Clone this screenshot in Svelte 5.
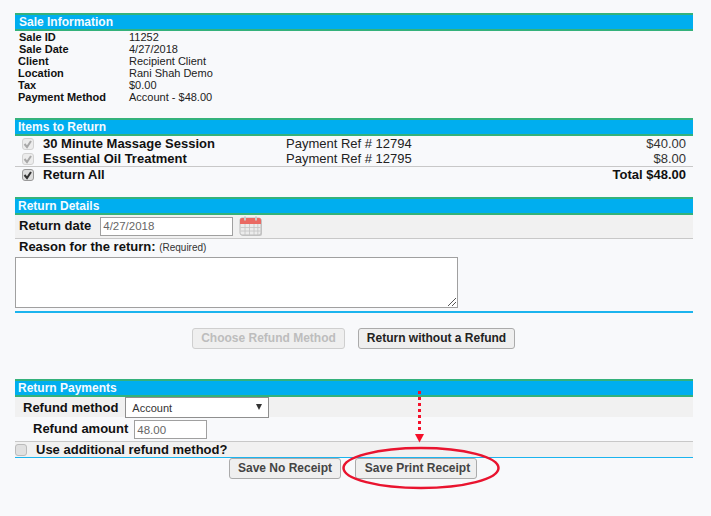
<script>
  const info = [
    ['Sale ID', '11252', 'in1'],
    ['Sale Date', '4/27/2018', 'in1'],
    ['Client', 'Recipient Client', ''],
    ['Location', 'Rani Shah Demo', ''],
    ['Tax', '$0.00', ''],
    ['Payment Method', 'Account - $48.00', '']
  ];
  const items = [
    ['30 Minute Massage Session', 'Payment Ref # 12794', '$40.00'],
    ['Essential Oil Treatment', 'Payment Ref # 12795', '$8.00']
  ];
</script>

<div class="page">
  <section class="sale">
    <h2 class="head first">Sale Information</h2>
    <div class="info">
      {#each info as [k, v, c]}
        <div class="info-row {c}"><b>{k}</b><span>{v}</span></div>
      {/each}
    </div>
  </section>

  <section class="items">
    <h2 class="head">Items to Return</h2>
    <div class="item-list">
      {#each items as [name, ref, price]}
        <div class="item">
          <span class="check dim"><svg viewBox="0 0 12 12" width="12" height="12"><path d="M2.500 6l2.500 3 4-6" fill="none" stroke="#a8a8a8" stroke-width="2"/></svg></span>
          <b class="name">{name}</b><span class="ref">{ref}</span><span class="price">{price}</span>
        </div>
      {/each}
    </div>
    <div class="item total">
      <span class="check on"><svg viewBox="0 0 12 12" width="12" height="12"><path d="M2.500 6l2.500 3 4-6" fill="none" stroke="#333" stroke-width="2"/></svg></span>
      <b class="name">Return All</b><b class="price">Total $48.00</b>
    </div>
  </section>

  <section class="details">
    <h2 class="head">Return Details</h2>
    <div class="date-row">
      <b>Return date</b>
      <span class="field date">4/27/2018</span>
      <svg class="cal" viewBox="0 0 24 22" width="24" height="22">
        <rect x="2" y="4" width="21" height="17" rx="2" fill="#9a9a9a" opacity=".5"/>
        <rect x="1" y="3" width="21" height="17" rx="2" fill="#ececec" stroke="#bdbdbd"/>
        <path d="M1 9V5a2 2 0 0 1 2-2h17a2 2 0 0 1 2 2v4z" fill="#ea6a64"/>
        <path d="M6 1.500v4M17 1.500v4" stroke="#c9c9c9" stroke-width="2"/>
        <path d="M1.500 12.500h20M1.500 16h20M6 9v11M10.500 9v11M15 9v11M18.800 9v11" stroke="#c4c4c4" stroke-width=".8" fill="none"/>
      </svg>
    </div>
    <div class="reason"><b>Reason for the return:</b> <small>(Required)</small></div>
    <div class="textarea">
      <svg class="grip" viewBox="0 0 10 10" width="10" height="10"><path d="M1 9l8-8M5 9l4-4" stroke="#555" stroke-width="1"/></svg>
    </div>
    <div class="rule"></div>
  </section>

  <div class="choices">
    <button class="btn disabled">Choose Refund Method</button>
    <button class="btn strong">Return without a Refund</button>
  </div>

  <section class="payments">
    <h2 class="head">Return Payments</h2>
    <div class="method-row">
      <b>Refund method</b>
      <span class="select">Account<i></i></span>
    </div>
    <div class="amount-row">
      <b>Refund amount</b>
      <span class="field amount">48.00</span>
    </div>
    <div class="extra-row">
      <span class="check"></span>
      <b>Use additional refund method?</b>
    </div>
    <div class="actions">
      <button class="btn">Save No Receipt</button>
      <button class="btn print">Save Print Receipt</button>
    </div>
  </section>

  <svg class="marks" width="711" height="516" viewBox="0 0 711 516">
    <path d="M419.500 391V433" stroke="#f5102a" stroke-width="3" stroke-dasharray="3 3" fill="none"/>
    <path d="M415 434h9l-4.500 8.500z" fill="#f5102a"/>
    <ellipse cx="421" cy="468" rx="77.500" ry="20" fill="none" stroke="#e9142f" stroke-width="2.500"/>
  </svg>
</div>

<style>
  :global(body) {
    margin: 0;
    background: #f8f9fb;
  }
  .page {
    position: relative;
    width: 678px;
    height: 516px;
    padding-left: 15px;
    overflow: hidden;
    font-family: "Liberation Sans", Arial, sans-serif;
    color: #111;
  }
  .head {
    margin: 0;
    height: 14px;
    padding-left: 3px;
    background: #00aeef;
    border-top: 2px solid #34b27b;
    border-bottom: 2px solid #34b27b;
    color: #f4fbff;
    font-size: 12px;
    font-weight: bold;
    line-height: 14px;
  }
  .head.first {
    padding-left: 4px;
  }
  .sale {
    padding-top: 13px;
  }
  .info {
    height: 87px;
    font-size: 11px;
    line-height: 12px;
  }
  .info-row {
    display: flex;
    height: 12px;
    padding-left: 3px;
  }
  .info-row b {
    width: 110px;
    font-weight: bold;
  }
  .info-row span {
    margin-left: 1px;
    color: #222;
  }
  .info-row.in1 {
    padding-left: 4px;
  }
  .info-row.in1 span {
    margin-left: 0;
  }
  .items {
    height: 79px;
  }
  .item-list {
    height: 30px;
    border-bottom: 1px solid #c8c8c8;
  }
  .item {
    display: flex;
    align-items: center;
    height: 15px;
    padding-left: 7px;
    font-size: 13px;
  }
  .item .name {
    width: 243px;
    margin-left: 9px;
  }
  .ref {
    color: #222;
  }
  .price {
    margin-left: auto;
    margin-right: 7px;
    color: #333;
  }
  .total .price {
    color: #111;
  }
  .check {
    flex: none;
    display: inline-block;
    box-sizing: border-box;
    width: 12px;
    height: 12px;
    background: #e4e4e4;
    border: 1px solid #b3b3b3;
    border-radius: 3px;
    line-height: 0;
  }
  .check svg {
    margin: -1px;
  }
  .check.dim {
    background: #ececec;
    border-color: #d2d2d2;
  }
  .check.on {
    background: #ddd;
    border-color: #999;
  }
  .date-row {
    display: flex;
    align-items: center;
    box-sizing: border-box;
    height: 24px;
    padding-left: 4px;
    background: #f1f1f1;
    border-bottom: 1px solid #c8c8c8;
    font-size: 13px;
  }
  .date-row b {
    margin-bottom: 2px;
  }
  .field {
    box-sizing: border-box;
    display: block;
    background: #fff;
    border: 1px solid #a0a0a0;
    color: #666;
    font-size: 11.500px;
    padding-left: 2px;
  }
  .date {
    width: 133px;
    height: 19px;
    line-height: 17px;
    margin-left: 9px;
  }
  .cal {
    margin: 0 0 2px 6px;
  }
  .reason {
    height: 18px;
    padding-left: 4px;
    font-size: 13px;
    line-height: 15px;
  }
  .reason small {
    font-size: 10px;
    color: #333;
  }
  .textarea {
    position: relative;
    box-sizing: border-box;
    width: 443px;
    height: 51px;
    background: #fff;
    border: 1px solid #a0a0a0;
  }
  .grip {
    position: absolute;
    right: 0;
    bottom: 0;
  }
  .rule {
    height: 2px;
    margin-top: 3px;
    background: #1cb4ee;
  }
  .choices {
    display: flex;
    gap: 13px;
    height: 66px;
    padding: 15px 0 0 177px;
    box-sizing: border-box;
  }
  .btn {
    box-sizing: border-box;
    height: 21px;
    padding: 0;
    background: #efefef;
    border: 1px solid #ababab;
    border-radius: 3px;
    font: bold 12px/19px "Liberation Sans", Arial, sans-serif;
    color: #444;
    text-align: center;
  }
  .choices .btn:first-child {
    width: 153px;
  }
  .choices .btn:last-child {
    width: 157px;
  }
  .btn.disabled {
    color: #bdbdbd;
    border-color: #cfcfcf;
  }
  .btn.strong {
    color: #222;
  }
  .method-row {
    display: flex;
    align-items: center;
    height: 20px;
    padding-left: 8px;
    background: #f1f1f1;
    font-size: 13px;
  }
  .select {
    position: relative;
    box-sizing: border-box;
    display: block;
    width: 144px;
    height: 21px;
    margin-left: 7px;
    padding-left: 6px;
    background: #fff;
    border: 1px solid #8f8f8f;
    font-size: 11px;
    line-height: 21px;
    color: #333;
  }
  .select i {
    position: absolute;
    right: 6px;
    top: 6px;
    border-left: 3.500px solid transparent;
    border-right: 3.500px solid transparent;
    border-top: 6px solid #333;
  }
  .amount-row {
    display: flex;
    align-items: center;
    height: 24px;
    padding-left: 18px;
    font-size: 13px;
  }
  .amount-row b {
    margin-bottom: 2px;
  }
  .amount {
    width: 73px;
    height: 19px;
    line-height: 18px;
    margin-left: 6px;
  }
  .extra-row {
    display: flex;
    align-items: center;
    box-sizing: border-box;
    height: 17px;
    background: #f1f1f1;
    border-top: 1px solid #c8c8c8;
    border-bottom: 1px solid #1cb4ee;
    font-size: 13px;
  }
  .extra-row b {
    margin-left: 9px;
  }
  .extra-row .check {
    background: #e0e0e0;
    border-color: #bbb;
  }
  .actions {
    display: flex;
    gap: 14px;
    padding-left: 214px;
  }
  .actions .btn:first-child {
    width: 112px;
  }
  .actions .btn:last-child {
    width: 122px;
  }
  .actions .btn.print {
    padding-left: 3px;
  }
  .marks {
    position: absolute;
    left: 0;
    top: 0;
    pointer-events: none;
  }
</style>
